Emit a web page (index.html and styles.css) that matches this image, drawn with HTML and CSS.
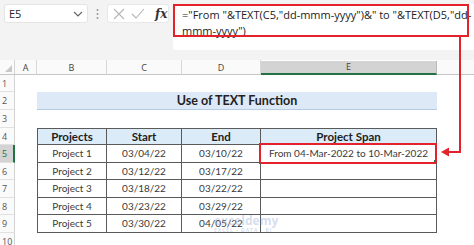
FILE: index.html
```html
<!DOCTYPE html>
<html lang="en">
<head>
    <meta charset="UTF-8">
    <meta name="viewport" content="width=device-width, initial-scale=1.0">
    <title>Use of TEXT Function</title>
    <link rel="stylesheet" href="styles.css">
</head>
<body>
    <!-- Barra de fórmulas -->
    <div class="formula-bar">
        <div class="name-box">
            <span>E5</span>
            <svg class="chevron" width="10" height="6" viewBox="0 0 10 6"><path d="M1 1 L5 5 L9 1" fill="none" stroke="#666" stroke-width="1.2"/></svg>
        </div>
        <svg class="grip" width="3" height="12" viewBox="0 0 3 12"><circle cx="1.5" cy="2" r="1" fill="#999"/><circle cx="1.5" cy="6" r="1" fill="#999"/><circle cx="1.5" cy="10" r="1" fill="#999"/></svg>
        <div class="fx-box">
            <svg width="12" height="12" viewBox="0 0 12 12"><path d="M1 1 L11 11 M11 1 L1 11" stroke="#b5b5b5" stroke-width="1.1"/></svg>
            <svg width="14" height="12" viewBox="0 0 14 12"><path d="M1 6 L5 10 L13 1" fill="none" stroke="#b5b5b5" stroke-width="1.1"/></svg>
            <span class="fx">fx</span>
        </div>
        <div class="formula-input">
            <div class="formula-text">="From "&amp;TEXT(C5,"dd-mmm-yyyy")&amp;" to "&amp;TEXT(D5,"dd-<br>mmm-yyyy")</div>
        </div>
    </div>

    <!-- Hoja -->
    <div class="sheet">
        <div class="corner"><span class="tri"></span></div>
        <div class="col-head">A</div>
        <div class="col-head">B</div>
        <div class="col-head">C</div>
        <div class="col-head">D</div>
        <div class="col-head selected">E</div>
        <div class="col-head last"></div>

        <div class="row-head r1">1</div>
        <div class="row-head r2">2</div>
        <div class="row-head r3">3</div>
        <div class="row-head r4">4</div>
        <div class="row-head r5 selected">5</div>
        <div class="row-head r6">6</div>
        <div class="row-head r7">7</div>
        <div class="row-head r8">8</div>
        <div class="row-head r9">9</div>
        <div class="row-head r10">10</div>

        <div class="title">Use of TEXT Function</div>

        <div class="data-table">
            <div class="cell head first">Projects</div>
            <div class="cell head">Start</div>
            <div class="cell head">End</div>
            <div class="cell head">Project Span</div>

            <div class="cell first">Project 1</div>
            <div class="cell">03/04/22</div>
            <div class="cell">03/10/22</div>
            <div class="cell active">From 04-Mar-2022 to 10-Mar-2022<span class="handle"></span></div>

            <div class="cell first">Project 2</div>
            <div class="cell">03/12/22</div>
            <div class="cell">03/17/22</div>
            <div class="cell"></div>

            <div class="cell first">Project 3</div>
            <div class="cell">03/18/22</div>
            <div class="cell">03/22/22</div>
            <div class="cell"></div>

            <div class="cell first">Project 4</div>
            <div class="cell">03/23/22</div>
            <div class="cell">03/29/22</div>
            <div class="cell"></div>

            <div class="cell first">Project 5</div>
            <div class="cell">03/30/22</div>
            <div class="cell">04/05/22</div>
            <div class="cell"></div>
        </div>
    </div>

    <!-- Marca de agua -->
    <div class="watermark">exceldemy<small>EXCEL · DATA · BI</small></div>

    <!-- Flecha roja de la fórmula a la celda -->
    <svg class="callout" width="474" height="245" viewBox="0 0 474 245">
        <path d="M460 37 L460 152 L448 152" fill="none" stroke="#e3222b" stroke-width="2"/>
        <path d="M441 152 L449 147.5 L449 156.5 Z" fill="#e3222b"/>
    </svg>
</body>
</html>
```

FILE: styles.css
```css
body {
    margin: 0;
    width: 474px;
    height: 245px;
    overflow: hidden;
    position: relative;
    background: #fff;
    font-family: Lato, "Open Sans", sans-serif;
    color: #333;
}

/* Barra de fórmulas */
.formula-bar {
    height: 60px;
    background: #f3f3f3;
    display: flex;
    align-items: flex-start;
    padding: 4px 0 0 4px;
    box-sizing: border-box;
}
.name-box {
    width: 84px;
    height: 19px;
    background: #fff;
    border: 1px solid #e4e4e4;
    border-radius: 3px;
    box-sizing: border-box;
    display: flex;
    align-items: center;
    justify-content: space-between;
    padding: 0 4px 0 4px;
    font-family: "Open Sans", sans-serif;
    font-size: 11px;
    color: #222;
}
.grip {
    margin: 4px 8px 0 8px;
}
.fx-box {
    width: 62px;
    height: 19px;
    background: #fff;
    border: 1px solid #e8e8e8;
    border-radius: 3px;
    box-sizing: border-box;
    display: flex;
    align-items: center;
    gap: 6px;
    padding-left: 5px;
}
.fx {
    font-family: "DejaVu Serif", serif;
    font-style: italic;
    font-weight: bold;
    font-size: 12px;
    color: #333;
    margin-left: 4px;
}
.formula-input {
    margin-left: 4px;
    flex: 1;
    height: 46px;
    background: #fff;
    border-radius: 3px 0 0 3px;
    position: relative;
}
.formula-input::before {
    content: "";
    position: absolute;
    left: 0;
    top: 0;
    width: 296px;
    height: 33px;
    border: 2px solid #e3222b;
    box-sizing: border-box;
}
.formula-text {
    padding: 3px 0 0 9px;
    font-family: "Open Sans", sans-serif;
    font-size: 11px;
    line-height: 16px;
    color: #222;
    white-space: nowrap;
}

/* Hoja */
.sheet {
    display: grid;
    grid-template-columns: 15px 22px 70px 75px 79px 176px 1fr;
    grid-template-rows: 15px 17px 18px 18px 17px 18px 17px 18px 17px 18px 17px;
    font-size: 10px;
}
.corner {
    background: #fafafa;
    border-right: 1px solid #d4d4d4;
    border-bottom: 1px solid #c6c6c6;
    position: relative;
}
.tri {
    position: absolute;
    right: 2px;
    bottom: 2px;
    border-left: 7px solid transparent;
    border-bottom: 7px solid #c8c8c8;
}
.col-head {
    background: #fafafa;
    border-right: 1px solid #d8d8d8;
    border-bottom: 1px solid #c6c6c6;
    text-align: center;
    line-height: 15px;
    font-family: "Open Sans", sans-serif;
    font-size: 9px;
    color: #444;
}
.col-head.selected {
    background: #d3d3d3;
    border-bottom: 2px solid #217346;
    border-right-color: #bbb;
    margin-top: 1px;
    line-height: 12px;
}
.col-head.last {
    border-right: none;
}
.row-head {
    grid-column: 1;
    background: #fafafa;
    border-right: 1px solid #d4d4d4;
    border-bottom: 1px solid #e1e1e1;
    font-family: "Open Sans", sans-serif;
    font-size: 9px;
    color: #555;
    padding-left: 2px;
    display: flex;
    align-items: center;
}
.row-head.selected {
    background: #d3d3d3;
    color: #217346;
    border-right: 2px solid #217346;
}
.r1 { grid-row: 2; }
.r2 { grid-row: 3; }
.r3 { grid-row: 4; }
.r4 { grid-row: 5; }
.r5 { grid-row: 6; }
.r6 { grid-row: 7; }
.r7 { grid-row: 8; }
.r8 { grid-row: 9; }
.r9 { grid-row: 10; }
.r10 { grid-row: 11; }

.title {
    grid-column: 3 / 7;
    grid-row: 3;
    background: #dde9f6;
    border-bottom: 1px solid #b4cce6;
    text-align: center;
    font-weight: bold;
    font-size: 12.5px;
    line-height: 18px;
    color: #222;
}

.data-table {
    grid-column: 3 / 7;
    grid-row: 5 / 11;
    display: grid;
    grid-template-columns: 70px 75px 79px 176px;
    grid-template-rows: 17px 18px 17px 18px 17px 18px;
}
.cell {
    border-right: 1px solid #5a5a5a;
    border-bottom: 1px solid #5a5a5a;
    text-align: center;
    font-size: 10px;
    line-height: 17px;
    color: #3a3a3a;
    position: relative;
    white-space: nowrap;
}
.cell.first {
    border-left: 1px solid #5a5a5a;
}
.cell.head {
    border-top: 1px solid #5a5a5a;
    background: #dcebf8;
    font-weight: bold;
    font-size: 11.5px;
    line-height: 15px;
    color: #1e1e1e;
}
.cell.active::after {
    content: "";
    position: absolute;
    left: -2px;
    top: -2px;
    right: -1px;
    bottom: -2px;
    border: 2px solid #e3222b;
}
.handle {
    position: absolute;
    right: -1px;
    bottom: -1px;
    width: 3px;
    height: 3px;
    background: #217346;
}

.watermark {
    position: absolute;
    left: 214px;
    top: 215px;
    font-family: "Open Sans", sans-serif;
    font-size: 12px;
    font-weight: bold;
    color: rgba(150, 170, 210, 0.4);
    line-height: 12px;
}
.watermark small {
    display: block;
    font-size: 5px;
    line-height: 6px;
    letter-spacing: 1px;
}

.callout {
    position: absolute;
    left: 0;
    top: 0;
    pointer-events: none;
}
```
